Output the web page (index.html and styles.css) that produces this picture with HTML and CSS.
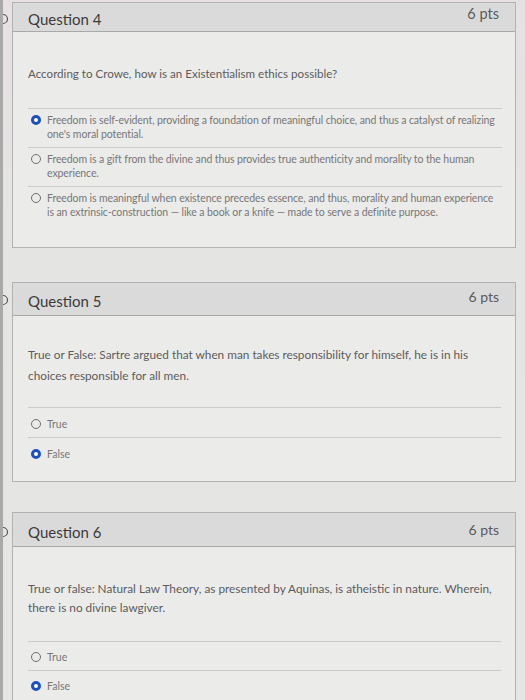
FILE: index.html
```html
<!DOCTYPE html>
<html>
<head>
<meta charset="utf-8">
<link rel="stylesheet" href="styles.css">
</head>
<body>
<div class="page">
  <div class="edge"></div>
  <div class="content">
    <section class="qrow q4">
      <div class="gutter"><svg class="flag" width="6" height="12" viewBox="0 0 6 12"><path d="M0 1.5 A4.5 4.5 0 0 1 0 10.5" fill="none" stroke="#555" stroke-width="1.2"/></svg></div>
      <div class="card">
        <div class="card-head"><span class="title">Question 4</span><span class="pts">6 pts</span></div>
        <div class="card-body">
          <p class="qtext">According to Crowe, how is an Existentialism ethics possible?</p>
          <div class="answers">
            <div class="answer"><span class="radio on"></span><span class="atext">Freedom is self-evident, providing a foundation of meaningful choice, and thus a catalyst of realizing one's moral potential.</span></div>
            <div class="answer"><span class="radio"></span><span class="atext">Freedom is a gift from the divine and thus provides true authenticity and morality to the human experience.</span></div>
            <div class="answer"><span class="radio"></span><span class="atext">Freedom is meaningful when existence precedes essence, and thus, morality and human experience is an extrinsic-construction — like a book or a knife — made to serve a definite purpose.</span></div>
          </div>
        </div>
      </div>
    </section>

    <section class="qrow q5">
      <div class="gutter"><svg class="flag" width="6" height="12" viewBox="0 0 6 12"><path d="M0 1.5 A4.5 4.5 0 0 1 0 10.5" fill="none" stroke="#555" stroke-width="1.2"/></svg></div>
      <div class="card">
        <div class="card-head"><span class="title">Question 5</span><span class="pts">6 pts</span></div>
        <div class="card-body">
          <p class="qtext">True or False: Sartre argued that when man takes responsibility for himself, he is in his choices responsible for all men.</p>
          <div class="answers">
            <div class="answer"><span class="radio"></span><span class="atext">True</span></div>
            <div class="answer"><span class="radio on"></span><span class="atext">False</span></div>
          </div>
        </div>
      </div>
    </section>

    <section class="qrow q6">
      <div class="gutter"><svg class="flag" width="6" height="12" viewBox="0 0 6 12"><path d="M0 1.5 A4.5 4.5 0 0 1 0 10.5" fill="none" stroke="#555" stroke-width="1.2"/></svg></div>
      <div class="card">
        <div class="card-head"><span class="title">Question 6</span><span class="pts">6 pts</span></div>
        <div class="card-body">
          <p class="qtext">True or false: Natural Law Theory, as presented by Aquinas, is atheistic in nature. Wherein, there is no divine lawgiver.</p>
          <div class="answers">
            <div class="answer"><span class="radio"></span><span class="atext">True</span></div>
            <div class="answer"><span class="radio on"></span><span class="atext">False</span></div>
          </div>
        </div>
      </div>
    </section>
  </div>
</div>
</body>
</html>
```

FILE: styles.css
```css
html, body {
  margin: 0;
  padding: 0;
  height: 100%;
  overflow: hidden;
}
body {
  background: #e3e3e1;
  font-family: Lato, "Liberation Sans", sans-serif;
  color: #4a4a4a;
}
.page {
  display: flex;
  height: 700px;
  background: linear-gradient(180deg, #e6e0e2 0%, #e4e4e2 30%, #e5e6e4 100%);
}
.edge {
  width: 3px;
  flex: none;
  background: #a9a9a9;
}
.content {
  flex: 1;
  padding-top: 2px;
}
.qrow {
  display: flex;
}
.gutter {
  width: 9px;
  flex: none;
  padding-top: 14px;
}
.flag {
  display: block;
}
.card {
  width: 502px;
  border: 1px solid #b2b2b2;
  background: #ebebea;
}
.card-head {
  display: flex;
  justify-content: space-between;
  align-items: flex-start;
  background: #dadada;
  border-bottom: 1px solid #a9a9a9;
  padding: 0 16px 0 15px;
}
.title {
  font-size: 15px;
  color: #3a3a3a;
  line-height: 18px;
  margin-top: 10px;
}
.pts {
  font-size: 14.5px;
  color: #5a5a5a;
  line-height: 16px;
  margin-top: 6px;
}
.card-body {
  padding: 0 14px 0 15px;
}
.qtext {
  margin: 0;
  color: #5c5c5c;
}
.answer {
  display: flex;
  align-items: flex-start;
  border-top: 1px solid #cbcbcb;
  color: #777;
}
.radio {
  flex: none;
  box-sizing: border-box;
  width: 10px;
  height: 10px;
  border-radius: 50%;
  border: 1.3px solid #6e6e6e;
  background: transparent;
  margin: 0 6px 0 3px;
}
.radio.on {
  border: 3px solid #1a4fc4;
  background: #fff;
}

/* Question 4 */
.q4 .card-head { height: 28px; }
.q4 .title { margin-top: 7px; }
.q4 .pts { margin-top: 3px; }
.q4 .gutter { padding-top: 11px; }
.q4 .qtext { font-size: 11.6px; line-height: 14px; padding: 35px 0 27px; }
.q4 .answer { font-size: 10.5px; line-height: 14px; padding: 4px 0 6px; margin-right: -1px; letter-spacing: -0.1px; }
.q4 .answers { padding-bottom: 22px; }
.q4 .radio { margin-top: 2px; }

/* Question 5 */
.q5 { margin-top: 34px; }
.q5 .card-head { height: 32px; }
.q5 .title { margin-top: 9px; }
.q5 .pts { margin-top: 6px; font-size: 14px; }
.q5 .gutter { padding-top: 12px; }
.q5 .qtext { font-size: 11.8px; line-height: 21px; padding: 28px 0 21px; }
.q5 .answer { font-size: 10.5px; line-height: 16px; padding: 8px 0 5px; }
.q5 .answers { padding-bottom: 14px; }
.q5 .radio { margin-top: 3px; }

/* Question 6 */
.q6 { margin-top: 30px; }
.q6 .card-head { height: 33px; }
.q6 .title { margin-top: 10px; }
.q6 .pts { margin-top: 9px; font-size: 14px; }
.q6 .gutter { padding-top: 14px; }
.q6 .qtext { font-size: 11.8px; line-height: 19px; padding: 32px 0 24px; }
.q6 .answer { font-size: 10.5px; line-height: 16px; padding: 7px 0 5px; }
.q6 .answers { padding-bottom: 14px; }
.q6 .radio { margin-top: 3px; }
```
